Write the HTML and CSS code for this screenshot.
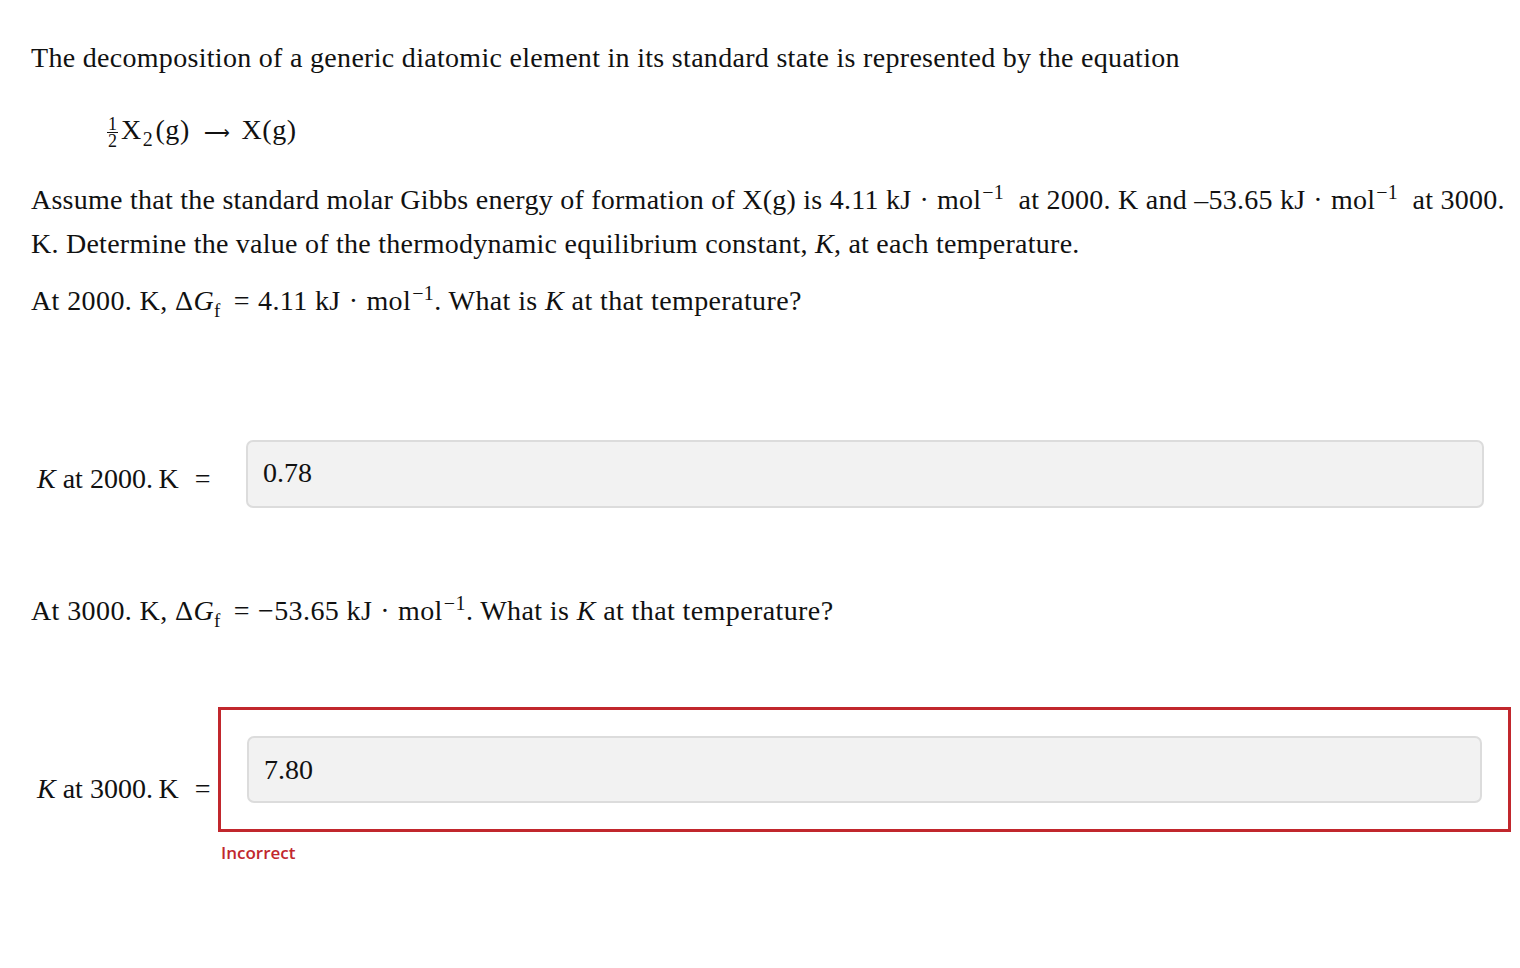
FILE: index.html
```html
<!DOCTYPE html>
<html>
<head>
<meta charset="utf-8">
<link rel="stylesheet" href="styles.css">
</head>
<body>
<div class="page">
  <p class="intro">The decomposition of a generic diatomic element in its standard state is represented by the equation</p>
  <div class="equation">
    <span class="frac"><span class="num">1</span><span class="den">2</span></span><span>X<sub class="sub">2</sub>(g)</span><span class="arrow">⟶</span><span>X(g)</span>
  </div>
  <p class="assume">Assume that the standard molar Gibbs energy of formation of X(g) is 4.11 kJ<span class="dot">·</span>mol<sup class="sup">−1</sup> &nbsp;at 2000. K and –53.65 kJ<span class="dot">·</span>mol<sup class="sup">−1</sup> &nbsp;at 3000. K. Determine the value of the thermodynamic equilibrium constant, <i>K</i>, at each temperature.</p>
  <p class="question q1">At 2000. K, Δ<i>G</i><sub class="subf">f</sub><span class="eq">=</span>4.11 kJ<span class="dot">·</span>mol<sup class="sup">−1</sup>. What is <i>K</i> at that temperature?</p>

  <div class="answer-row row1">
    <label class="answer-label"><i>K</i> at 2000.&thinsp;K<span class="eq lbl">=</span></label>
    <div class="answer-wrap">
      <div class="answer-input">0.78</div>
    </div>
  </div>

  <p class="question q2">At 3000. K, Δ<i>G</i><sub class="subf">f</sub><span class="eq">=</span>−53.65 kJ<span class="dot">·</span>mol<sup class="sup">−1</sup>. What is <i>K</i> at that temperature?</p>

  <div class="answer-row row2">
    <label class="answer-label"><i>K</i> at 3000.&thinsp;K<span class="eq lbl">=</span></label>
    <div class="answer-col">
      <div class="answer-wrap incorrect">
        <div class="answer-input">7.80</div>
      </div>
      <div class="feedback">Incorrect</div>
    </div>
  </div>
</div>
</body>
</html>
```
FILE: styles.css
```css
html, body {
  margin: 0;
  padding: 0;
  background: #ffffff;
}
body {
  font-family: "Liberation Serif", "Times New Roman", serif;
  font-size: 28px;
  color: #111111;
}
.page {
  padding: 40px 0 0 31px;
  width: 1480px;
}
p {
  margin: 0;
}
.intro {
  line-height: 36px;
  letter-spacing: 0.3px;
}
.equation {
  margin: 36px 0 0 76px;
  display: flex;
  align-items: center;
  line-height: 36px;
  height: 36px;
  letter-spacing: 0.6px;
}
.frac {
  display: inline-flex;
  flex-direction: column;
  align-items: center;
  font-size: 18px;
  line-height: 16px;
  margin-right: 3px;
  margin-top: 4px;
  letter-spacing: 0;
}
.frac .num {
  border-bottom: 1px solid #111;
  padding: 0 1px;
}
.sub {
  font-size: 20px;
  vertical-align: -7px;
  line-height: 0;
  margin: 0 2px 0 1px;
}
.arrow {
  font-size: 18px;
  margin: 6px 11px 0 14px;
}
.assume {
  margin-top: 30px;
  line-height: 44px;
  letter-spacing: 0.25px;
}
.dot {
  margin: 0 8px;
}
.eq {
  margin: 0 8px 0 9px;
}
.eq.lbl {
  margin: 0 0 0 16px;
}
.sup {
  font-size: 20px;
  vertical-align: 10px;
  line-height: 0;
  margin-left: 1px;
}
.subf {
  font-size: 19px;
  vertical-align: -7px;
  line-height: 0;
  margin-right: 4px;
}
.question {
  line-height: 36px;
  letter-spacing: 0.4px;
}
.q1 {
  margin-top: 17px;
}
.answer-row {
  display: flex;
  align-items: flex-start;
  margin-left: 6px;
}
.row1 {
  margin-top: 92px;
}
.answer-label {
  width: 181px;
  flex: none;
  line-height: 36px;
  white-space: nowrap;
}
.row1 .answer-label {
  margin-top: 50px;
}
.row2 .answer-label {
  margin-top: 64px;
}
.answer-col {
  display: flex;
  flex-direction: column;
  flex: 1;
}
.answer-wrap {
  flex: 1;
  border: 3px solid transparent;
  padding: 26px 26px 26px 26px;
}
.row1 .answer-wrap {
  padding-left: 25px;
  padding-right: 24px;
}
.answer-wrap.incorrect {
  border-color: #c1272d;
}
.answer-input {
  height: 63px;
  border: 2px solid #dcdcdc;
  border-radius: 7px;
  background: #f2f2f2;
  box-sizing: content-box;
  padding: 0 15px;
  display: flex;
  align-items: center;
  line-height: 36px;
}
.row1 .answer-input {
  padding-bottom: 2px;
  height: 62px;
}
.q2 {
  margin-top: 56px;
}
.row2 {
  margin-top: 78px;
}
.feedback {
  font-family: "Open Sans", "Liberation Sans", sans-serif;
  font-weight: 600;
  font-size: 17px;
  color: #c1272d;
  margin: 9px 0 0 3px;
  line-height: 24px;
}
```
